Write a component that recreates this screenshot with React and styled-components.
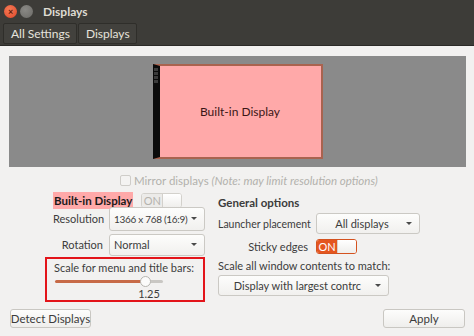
import React from "react";
import styled, { createGlobalStyle } from "styled-components";

const Global = createGlobalStyle`
  html, body { margin: 0; padding: 0; }
  body { font-family: Lato, "Liberation Sans", sans-serif; font-size: 11px; color: #3c3c3c; }
`;

const Window = styled.div`
  width: 474px;
  height: 336px;
  background: #f2f1f0;
  display: flex;
  flex-direction: column;
  overflow: hidden;
`;

const TitleBar = styled.div`
  height: 22px;
  background: #3d3c38;
  display: flex;
  align-items: center;
  padding-left: 4px;
  gap: 3px;
`;

const WinDot = styled.span`
  width: 13px;
  height: 13px;
  border-radius: 50%;
  background: ${(p) => (p.$close ? "radial-gradient(circle at 40% 35%, #f47a55, #e0472a)" : "radial-gradient(circle at 40% 35%, #8a8985, #6b6a66)")};
  display: flex;
  align-items: center;
  justify-content: center;
  color: #5a1a0a;
  font-size: 9px;
  font-weight: 700;
  line-height: 1;
`;

const Title = styled.span`
  margin-left: 7px;
  color: #dfdbd2;
  font-weight: 700;
  font-size: 12px;
`;

const Toolbar = styled.div`
  height: 24px;
  box-sizing: border-box;
  background: #3d3c38;
  border-bottom: 1px solid #2b2a27;
  display: flex;
  align-items: stretch;
  padding: 1px 3px 1px;
  gap: 1px;
`;

const ToolButton = styled.div`
  display: flex;
  align-items: center;
  padding: 0 6px 0 7px;
  color: #e6e3dc;
  font-size: 12px;
  background: #42413d;
  border: 1px solid #2f2e2a;
  border-radius: 2px;
`;

const Body = styled.div`
  flex: 1;
  display: flex;
  flex-direction: column;
  padding: 10px 8px 0 9px;
`;

const Canvas = styled.div`
  height: 111px;
  background: #8a8a8a;
  display: flex;
  justify-content: center;
  align-items: center;
`;

const Monitor = styled.div`
  width: 161px;
  height: 91px;
  background: #ffa9a9;
  border: 2px solid #a9634f;
  border-left: 7px solid #0b0b0b;
  display: flex;
  align-items: center;
  justify-content: center;
  color: #3a1616;
  font-size: 12px;
  position: relative;
`;

const LauncherIcons = styled.div`
  position: absolute;
  left: -6px;
  top: 2px;
  display: flex;
  flex-direction: column;
  gap: 1px;
  & > span {
    width: 4px;
    height: 3px;
    background: #3b3b3b;
  }
`;

const MirrorRow = styled.div`
  display: flex;
  align-items: center;
  gap: 3px;
  height: 16px;
  margin: 5px 0 0 111px;
  color: #b3b1ad;
  font-size: 11.5px;
`;

const CheckBox = styled.span`
  width: 9px;
  height: 9px;
  border: 1px solid #cfcdc9;
  border-radius: 2px;
  background: #f4f3f2;
`;

const Note = styled.i``;

const Columns = styled.div`
  display: grid;
  grid-template-columns: 160px 1fr;
  column-gap: 13px;
  margin: 4px 0 0 36px;
`;

const Column = styled.div`
  display: flex;
  flex-direction: column;
`;

const HeaderRow = styled.div`
  display: flex;
  align-items: center;
  gap: 8px;
  height: 17px;
  padding-left: 8px;
`;

const DisplayTag = styled.span`
  background: #ffa9a9;
  color: #1a1a1a;
  font-weight: 700;
  font-size: 11.5px;
  padding: 0 1px;
  line-height: 17px;
`;

const SwitchBox = styled.div`
  width: 39px;
  height: 13px;
  border: 1px solid ${(p) => (p.$on ? "#d4521f" : "#d3d1cc")};
  border-radius: 3px;
  display: flex;
  overflow: hidden;
  font-size: 11px;
  background: #fff;
`;

const SwitchLabel = styled.span`
  width: 20px;
  display: flex;
  align-items: center;
  justify-content: center;
  background: ${(p) => (p.$on ? "#e4561f" : "#ecebe9")};
  color: ${(p) => (p.$on ? "#fff" : "#b5b3ae")};
`;

const SwitchKnob = styled.span`
  flex: 1;
  background: linear-gradient(#ffffff, #efeeec);
  border-left: 1px solid #d3d1cc;
`;

const FormRow = styled.div`
  display: flex;
  align-items: center;
  height: ${(p) => p.$h || 24}px;
  margin-top: ${(p) => p.$mt || 0}px;
`;

const RowLabel = styled.span`
  width: ${(p) => p.$w}px;
  text-align: ${(p) => p.$align || "left"};
  padding-left: ${(p) => p.$pl || 0}px;
  padding-right: ${(p) => p.$pr || 0}px;
  font-size: ${(p) => p.$fs || 11}px;
  box-sizing: border-box;
  flex-shrink: 0;
  white-space: nowrap;
`;

const Combo = styled.div`
  width: ${(p) => p.$w}px;
  height: ${(p) => p.$h || 22}px;
  box-sizing: border-box;
  border: 1px solid #cbc9c4;
  border-radius: 3px;
  background: linear-gradient(#fdfdfc, #f1f0ee);
  display: flex;
  align-items: center;
  padding: 0 7px 0 ${(p) => p.$pl || 4}px;
  color: #3c3c3c;
  font-size: ${(p) => p.$fs || 11}px;
  letter-spacing: ${(p) => p.$ls || 0}px;
`;

const ComboText = styled.span`
  flex: 1;
  text-align: ${(p) => (p.$center ? "center" : "left")};
  white-space: nowrap;
`;

const Caret = styled.span`
  flex-shrink: 0;
  width: 0;
  height: 0;
  border-left: 3px solid transparent;
  border-right: 3px solid transparent;
  border-top: 3px solid #4a4a4a;
  margin-left: 3px;
`;

const ScaleBox = styled.div`
  height: 45px;
  box-sizing: border-box;
  border: 2px solid #e3141a;
  padding: 2px 6px 0 7px;
  display: flex;
  flex-direction: column;
  white-space: nowrap;
`;

const Track = styled.div`
  position: relative;
  height: 10px;
  margin: 2px 34px 0 1px;
  display: flex;
  align-items: center;
`;

const TrackLine = styled.div`
  flex: 1;
  height: 3px;
  border-radius: 2px;
  background: linear-gradient(to right, #c76a47 0 82%, #c9c7c3 82% 100%);
`;

const Knob = styled.span`
  position: absolute;
  left: 79%;
  top: 0;
  width: 9px;
  height: 9px;
  border-radius: 50%;
  background: #fbfbfa;
  border: 1px solid #b7b5b0;
`;

const ScaleValue = styled.div`
  text-align: center;
  margin-left: 47px;
  margin-top: 1px;
`;

const Bold = styled.div`
  font-weight: 700;
  font-size: 11.5px;
  height: 16px;
  line-height: 16px;
  margin-top: 3px;
  color: #3c3c3c;
`;

const Footer = styled.div`
  display: flex;
  justify-content: space-between;
  margin-top: auto;
  padding: 0 1px 8px 1px;
`;

const Button = styled.div`
  width: ${(p) => p.$w}px;
  height: 19px;
  box-sizing: border-box;
  border: 1px solid #c9c7c2;
  border-radius: 3px;
  background: linear-gradient(#fdfdfc, #efeeec);
  display: flex;
  align-items: center;
  justify-content: center;
  white-space: nowrap;
  font-size: 11.5px;
`;

const App = () => {
  return (
    <Window>
      <Global />
      <TitleBar>
        <WinDot $close>×</WinDot>
        <WinDot />
        <Title>Displays</Title>
      </TitleBar>
      <Toolbar>
        <ToolButton>All Settings</ToolButton>
        <ToolButton>Displays</ToolButton>
      </Toolbar>
      <Body>
        <Canvas>
          <Monitor>
            <LauncherIcons>
              <span />
              <span />
              <span />
              <span />
            </LauncherIcons>
            Built-in Display
          </Monitor>
        </Canvas>
        <MirrorRow>
          <CheckBox />
          <span>
            Mirror displays <Note>(Note: may limit resolution options)</Note>
          </span>
        </MirrorRow>
        <Columns>
          <Column>
            <HeaderRow>
              <DisplayTag>Built-in Display</DisplayTag>
              <SwitchBox>
                <SwitchLabel>ON</SwitchLabel>
                <SwitchKnob />
              </SwitchBox>
            </HeaderRow>
            <FormRow $h={25} $mt={-3}>
              <RowLabel $w={64} $pl={8}>Resolution</RowLabel>
              <Combo $w={96} $h={24} $fs={10} $ls={-0.3}>
                <ComboText>1366 x 768 (16:9)</ComboText>
                <Caret />
              </Combo>
            </FormRow>
            <FormRow $h={25} $mt={1}>
              <RowLabel $w={64} $align="right" $pr={6}>Rotation</RowLabel>
              <Combo $w={96} $h={22}>
                <ComboText>Normal</ComboText>
                <Caret />
              </Combo>
            </FormRow>
            <ScaleBox>
              <span>Scale for menu and title bars:</span>
              <Track>
                <TrackLine />
                <Knob />
              </Track>
              <ScaleValue>1.25</ScaleValue>
            </ScaleBox>
          </Column>
          <Column>
            <Bold>General options</Bold>
            <FormRow $h={23} $mt={1}>
              <RowLabel $w={98} $fs={10.5}>Launcher placement</RowLabel>
              <Combo $w={104} $h={21}>
                <ComboText $center>All displays</ComboText>
                <Caret />
              </Combo>
            </FormRow>
            <FormRow $h={16} $mt={3}>
              <RowLabel $w={98} $align="right" $pr={8}>Sticky edges</RowLabel>
              <SwitchBox $on>
                <SwitchLabel $on>ON</SwitchLabel>
                <SwitchKnob />
              </SwitchBox>
            </FormRow>
            <FormRow $h={16} $mt={3}>
              <span>Scale all window contents to match:</span>
            </FormRow>
            <FormRow $h={22} $mt={1}>
              <Combo $w={171} $h={21}>
                <ComboText $center>Display with largest contrc</ComboText>
                <Caret />
              </Combo>
            </FormRow>
          </Column>
        </Columns>
        <Footer>
          <Button $w={81}>Detect Displays</Button>
          <Button $w={82}>Apply</Button>
        </Footer>
      </Body>
    </Window>
  );
};

export default App;
